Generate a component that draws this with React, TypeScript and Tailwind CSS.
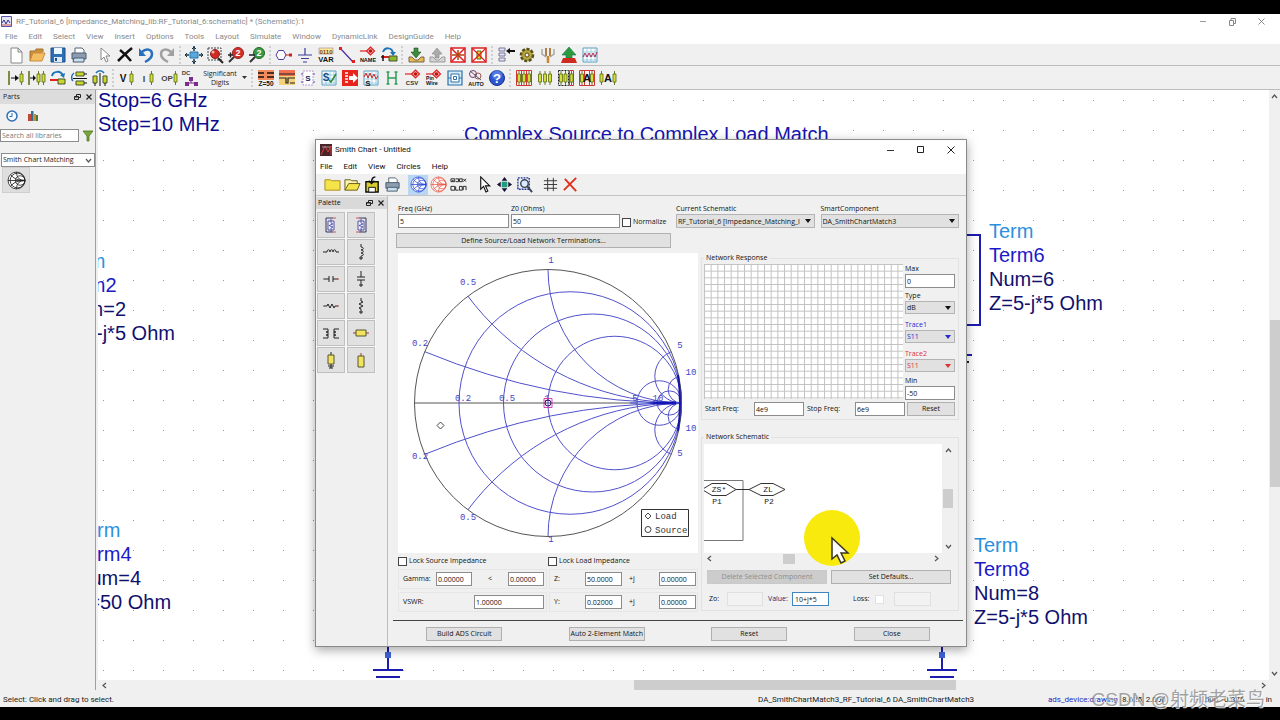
import React from "react";

const UI = "font-['Open_Sans','Noto_Sans',sans-serif]";

/* ---------- shared icon shapes ---------- */

type IconProps = { children: React.ReactNode; size?: number };

function Glyph({ children, size = 18 }: IconProps) {
  return (
    <svg width={size} height={size} viewBox="0 0 18 18" fill="none" aria-hidden="true">
      {children}
    </svg>
  );
}

const folder = (
  <>
    <path d="M2 15V5h5l1-2h7v3" fill="#c98f3c" stroke="#a9742c" />
    <path d="M2 15 5 7h12l-3 8z" fill="#f5bd62" stroke="#c98f3c" />
  </>
);
const printer = (
  <>
    <path d="M5 7V2h7l2 2v3" fill="#fff" stroke="#567" />
    <path d="M2 7h14v6H2z" fill="#8d9db0" stroke="#4a5b70" />
    <path d="M4 12h10v4H3z" fill="#c9e0ee" stroke="#4a5b70" />
  </>
);
const ycap = (x: number) => (
  <g>
    <path d={`M${x + 1.5} 2v14`} stroke="#6a7a2a" />
    <path d={`M${x} 5h3v8h-3z`} fill="#d3e03a" stroke="#5c6a12" strokeWidth=".8" />
  </g>
);
const gridBox = (
  <>
    <path d="M2 2h14v14H2z" fill="#fff" stroke="#58a0c0" />
    <path d="M6 2v14M10 2v14M14 2v14M2 6h14M2 10h14M2 14h14" stroke="#8fc4dc" strokeWidth=".8" />
  </>
);
const probe = (
  <>
    <path d="M1 5h9" stroke="#d22" strokeWidth="1.200" />
    <path d="m11.500 1 4 4-4 4-4-4z" fill="#fbb" stroke="#d22" strokeWidth="1.200" />
    <circle cx="11.500" cy="5" r="1.800" fill="#b11" />
  </>
);

function tiny(text: string, x: number, y: number, size = 6, fill = "#111") {
  return (
    <text
      x={x}
      y={y}
      fontSize={size}
      fill={fill}
      fontWeight="700"
      textAnchor="middle"
      fontFamily="'Liberation Sans', sans-serif"
    >
      {text}
    </text>
  );
}

type Tool = [string, React.ReactNode];

const fileTools: Tool[] = [
  ["New", <path d="M4 2h7l4 4v11H4zM11 2v4h4" fill="#fff" stroke="#888" />],
  ["Open", folder],
  [
    "Save",
    <>
      <path d="M2 2h14v14H2z" fill="#2c6fb5" stroke="#1c4f88" />
      <path d="M5 2h8v6H5z" fill="#eef6ff" />
      <path d="M5 11h8v5H5z" fill="#dceaf7" />
      <path d="M6 12h2v3H6z" fill="#1c4f88" />
    </>,
  ],
  ["Print", printer],
];
const editTools: Tool[] = [
  ["Select", <path d="M6 2v12l3-3 2 5 2-1-2-5h4z" fill="#fff" stroke="#888" />],
  ["Delete", <path d="M2 15C6 11 10 7 16 2M4 4c4 3 7 6 11 11" stroke="#111" strokeWidth="2.500" />],
  [
    "Undo",
    <>
      <path d="M5 6c4-4 10-3 10 2 0 3-3 6-7 8" stroke="#2670bd" strokeWidth="2.500" />
      <path d="M2 2v8h7z" fill="#2670bd" />
    </>,
  ],
  [
    "Redo",
    <>
      <path d="M13 6C9 2 3 3 3 8c0 3 3 6 7 8" stroke="#a0a0a0" strokeWidth="2.500" />
      <path d="M16 2v8H9z" fill="#a0a0a0" />
    </>,
  ],
];
const viewTools: Tool[] = [
  [
    "Pan",
    <>
      <path d="M5 6h8v6H5z" fill="#58a9dd" stroke="#2475aa" />
      <path d="M9 0v5M9 13v5M0 9h4M14 9h4" stroke="#134" strokeWidth="1.500" />
      <path d="m7 3 2-2 2 2M7 15l2 2 2-2M2 7 0 9l2 2M16 7l2 2-2 2" stroke="#134" />
    </>,
  ],
  [
    "Zoom area",
    <>
      <path d="M2 2h13v12H2z" stroke="#444" strokeDasharray="2 1" />
      <circle cx="9" cy="8" r="4.500" fill="#d22a22" stroke="#822" />
      <path d="m12 12 5 5" stroke="#222" strokeWidth="2" />
      <circle cx="7" cy="6" r="1.500" fill="#f8b8b0" />
    </>,
  ],
  [
    "Zoom in by 2",
    <>
      <circle cx="11" cy="7" r="5.500" fill="#d03028" stroke="#922" />
      {tiny("2", 11, 10, 9, "#fff")}
      <path d="m7 11-5 5" stroke="#333" strokeWidth="2" />
      <path d="M1 9h5M3.500 6.500v5" stroke="#222" strokeWidth="1.500" />
    </>,
  ],
  [
    "Zoom out by 2",
    <>
      <circle cx="11" cy="7" r="5.500" fill="#3a9a45" stroke="#262" />
      {tiny("2", 11, 10, 9, "#fff")}
      <path d="m7 11-5 5" stroke="#333" strokeWidth="2" />
      <path d="M1 9h6" stroke="#222" strokeWidth="1.500" />
    </>,
  ],
];
const insertTools: Tool[] = [
  [
    "Port",
    <>
      <path d="M1 9 3.500 4.500h5L11 9l-2.500 4.500h-5z" stroke="#4a3a9c" fill="#fff" />
      <path d="M11 9h5" stroke="#c22" />
      <path d="M14 7.500h3v3h-3z" fill="#c22" />
    </>,
  ],
  ["Ground", <path d="M9 2v7M2 9h14M5 12.500h8M7 16h4" stroke="#3b3b9c" strokeWidth="1.200" />],
  [
    "Variable",
    <>
      <path d="M2 2h14v6H2z" fill="#f8e8a0" stroke="#a88" strokeWidth=".6" />
      {tiny("0110", 9, 7.5, 6, "#841")}
      {tiny("VAR", 9, 16, 7.5)}
    </>,
  ],
  [
    "Wire",
    <>
      <path d="m2 2 13 14" stroke="#4a2b9c" strokeWidth="1.200" />
      <path d="M1 1h3v3H1zM14 14h3v3h-3z" fill="#d22" />
    </>,
  ],
  ["Wire name", <>{probe}{tiny("NAME", 9, 16, 5.5)}</>],
  [
    "Deactivate",
    <>
      <path d="M3 6c2-5 9-5 10 1" stroke="#1d75b5" strokeWidth="2" />
      <path d="m10 6 3 4 3-4z" fill="#1d75b5" />
      <path d="M1 11h8" stroke="#d22" strokeWidth="2" />
      <path d="M9 10h8v5H9z" fill="#8fb52a" stroke="#453" />
      <path d="M3 9v6" stroke="#111" strokeWidth="1.500" />
    </>,
  ],
];
const hierTools: Tool[] = [
  [
    "Push into",
    <>
      <path d="M2 11h3l3 3h3l3-3h3v5H2z" fill="#e8b848" stroke="#765" />
      <path d="M7 2h4v4h3l-5 6-5-6h3z" fill="#3c8a3c" stroke="#252" strokeWidth=".6" />
    </>,
  ],
  [
    "Pop out",
    <>
      <path d="M2 11h3l3 3h3l3-3h3v5H2z" fill="#d4d4d4" stroke="#999" />
      <path d="M7 12h4V8h3L9 2 4 8h3z" fill="#aaa" stroke="#888" strokeWidth=".6" />
    </>,
  ],
  [
    "Disable",
    <>
      <path d="M2 2h14v14H2z" fill="#fff" stroke="#d22" strokeWidth="1.500" />
      <path d="m2 2 14 14M16 2 2 16" stroke="#d22" strokeWidth="1.500" />
      <path d="M3 9h12M9 4v10" stroke="#a41" strokeWidth="1.500" />
    </>,
  ],
  [
    "Short",
    <>
      <path d="M2 2h14v14H2z" fill="#fff" stroke="#d22" strokeWidth="1.500" />
      <path d="M7 5h4v8H7z" fill="#e6d32e" stroke="#661" />
      <path d="m2 2 14 14M16 2 2 16" stroke="#d22" strokeWidth="1.200" />
    </>,
  ],
];
const simTools: Tool[] = [
  [
    "Component list",
    <>
      <path d="M2 2h6v3H2zM2 7h6v3H2zM2 12h6v3H2z" fill="#e3e6f4" stroke="#779" />
      <path d="M18 5h-6" stroke="#111" strokeWidth="2" />
      <path d="m9 5 4-3v6z" fill="#111" />
    </>,
  ],
  [
    "Simulate",
    <>
      <circle cx="9" cy="9" r="6" fill="#b9a53c" stroke="#54501c" strokeWidth="2.500" strokeDasharray="3 1.500" />
      <circle cx="9" cy="9" r="2" fill="#eee" stroke="#54501c" />
    </>,
  ],
  [
    "Tune",
    <>
      <path d="M7 2v8M11 2v8" stroke="#b0804a" strokeWidth="2" />
      <path d="M3 3v5l4 3M15 3v5l-4 3" stroke="#a8a8a8" strokeWidth="1.500" />
      <path d="M9 10v7" stroke="#c9862a" strokeWidth="2.500" />
    </>,
  ],
  [
    "Optimize",
    <>
      <path d="M9 1 2 9h4v3h6V9h4z" fill="#2c9a3c" stroke="#175" strokeWidth=".6" />
      <path d="M3 12h12l2 5H1z" fill="#cf2a20" />
    </>,
  ],
  ["Data display", <>{gridBox}<path d="m2 11 2-4 2 4 2-4 2 4 2-4 2 4 2-5" stroke="#b02a50" /></>],
];

const placeTools: Tool[] = [
  ["Wire gap", <><path d="M2 2v14" stroke="#5c6a12" strokeWidth="1.500" />{ycap(13)}<path d="M4 9h6" stroke="#111" /><path d="m8 6 4 3-4 3z" fill="#111" /></>],
  ["Wire stretch", <><path d="M1 2v14" stroke="#5c6a12" strokeWidth="1.500" />{ycap(9)}{ycap(14)}<path d="M2 9h4" stroke="#111" /><path d="m5 6 3 3-3 3z" fill="#111" /></>],
  [
    "Rotate",
    <>
      <path d="M3 7c1-5 9-6 11 0" stroke="#1d75b5" strokeWidth="2" />
      <path d="m11 6 4 3 1-5z" fill="#1d75b5" />
      <path d="M1 11h9" stroke="#d22" strokeWidth="2" />
      <path d="M9 10h7v5H9z" fill="#c9d62a" stroke="#453" />
    </>,
  ],
  [
    "Mirror X",
    <>
      <path d="M6 3h8v4H6zM6 12h8v4H6z" fill="#c9d62a" stroke="#453" />
      <path d="M3 9.500h14M14 5h3M14 14h3" stroke="#111" />
      <path d="M4 4C1 6 1 10 3 12" stroke="#1d75b5" strokeWidth="1.500" />
    </>,
  ],
  [
    "Mirror Y",
    <>
      <path d="M2 7h4v7H2zM12 7h4v7h-4z" fill="#c9d62a" stroke="#453" />
      <path d="M9 4v13M4 14v3M14 14v3" stroke="#111" />
      <path d="M5 4c2-3 6-3 8 0" stroke="#1d75b5" strokeWidth="1.500" />
    </>,
  ],
];
const annTools: Tool[] = [
  ["Voltage", <>{tiny("V", 5, 13, 10)}{ycap(12)}</>],
  ["Current", <>{tiny("I", 5, 12.5, 9, "#444")}{ycap(11)}</>],
  ["Operating point", <>{tiny("OP", 7, 12, 8, "#444")}{ycap(14)}</>],
  [
    "DC",
    <>
      {tiny("DC", 5, 6, 6, "#444")}
      <path d="M8 8h4v4H8zM4 13h4v4H4zM13 13h4v4h-4z" fill="#7b2b8c" />
      <path d="M10 12v2M6 14h8" stroke="#7b2b8c" />
    </>,
  ],
];
const rfTools: Tool[] = [
  [
    "Impedance",
    <>
      <path d="M1 1h16v10H1z" fill="#f28a5c" />
      <path d="M1 4h6M10 4h7M1 8h6M10 8h7" stroke="#111" strokeWidth="1.500" />
      {tiny("Z=50", 9, 17, 6.5)}
    </>,
  ],
  [
    "Line calc",
    <>
      <path d="M1 1h16v6H1z" fill="#f07050" />
      <path d="M1 7h16v9H1z" fill="#f4d27a" />
      <path d="M1 5h16M1 9h7v5h2V9h7M12 14h5" stroke="#222" strokeWidth="1.200" />
    </>,
  ],
  [
    "S block",
    <>
      <path d="M4 2h10v14H4z" fill="#fff" stroke="#b9c" strokeDasharray="2 1" />
      <path d="M2 5h2M2 13h2M14 5h2M14 13h2" stroke="#55a" />
      {tiny("S", 9, 12, 8, "#226")}
    </>,
  ],
  ["S check", <>{gridBox}{tiny("S", 6, 12, 10, "#174a80")}<path d="m9 11 2 2 5-8" stroke="#2a8a3a" strokeWidth="1.500" /></>],
  [
    "Export",
    <>
      <path d="M1 1h16v16H1z" fill="#e8251c" />
      <path d="M4 4h3M4 7h3M4 10h3M4 13h3" stroke="#fff" strokeWidth="1.500" />
      <path d="M8 7h4V4l5 5-5 5v-3H8z" fill="#fff" />
    </>,
  ],
  ["S plot", <>{gridBox}<path d="m2 8 2-4 2 5 2-5 2 5 2-4 2 5 2-3" stroke="#c22" />{tiny("S", 6, 17, 8, "#222")}</>],
  ["H block", <path d="M5 3v12M13 3v12M5 9h8M3.500 3h3M3.500 15h3M11.500 3h3M11.500 15h3" stroke="#2b9c58" strokeWidth="1.500" />],
  ["CSV probe", <>{probe}{tiny("CSV", 8, 16, 6, "#333")}</>],
  ["Pin wire", <>{probe}{tiny("Pin", 5, 11, 5)}{tiny("Wire", 7, 16, 5.5)}</>],
  [
    "Layout",
    <>
      <path d="M2 2h14v14H2z" fill="#d4ebf8" stroke="#2f70a8" strokeWidth="1.200" />
      <path d="M5 5h8v8H5z" fill="#fff" stroke="#2f70a8" />
      <path d="M7.500 7.500h3v3h-3zM2 9h3M13 9h3" stroke="#2f70a8" />
    </>,
  ],
  [
    "Auto",
    <>
      <circle cx="6" cy="5" r="3.500" stroke="#737" />
      <circle cx="11" cy="7" r="3" stroke="#955" />
      <path d="m3 2 11 9" stroke="#555" />
      {tiny("AUTO", 9, 17, 5.5)}
    </>,
  ],
  [
    "Help",
    <>
      <circle cx="9" cy="9" r="7.500" fill="#2c55cf" stroke="#15328c" />
      <circle cx="9" cy="6" r="5" fill="#6f92ee" opacity=".6" />
      {tiny("?", 9, 14, 13, "#fff")}
    </>,
  ],
];
const redFrame = <path d="M1.500 1.500h15v15h-15zM6.500 2v14M11.500 2v14" stroke="#cf3434" fill="#fdf3f0" />;
const optTools: Tool[] = [
  ["Tune all", <>{redFrame}{ycap(2.5)}{ycap(7.5)}{ycap(12.5)}</>],
  ["Tune parts", <>{ycap(2.5)}{ycap(7.5)}{ycap(12.5)}</>],
  [
    "Tune group",
    <>
      <path d="M1.500 1.500h10v15h-10z" stroke="#222" strokeDasharray="2 1" />
      <path d="M12.500 1.500h4v15h-4z" stroke="#cf3434" fill="#fdf3f0" />
      {ycap(2.5)}{ycap(7)}{ycap(13)}
    </>,
  ],
  ["Auto all", <>{redFrame}{ycap(2.5)}{ycap(12.5)}{tiny("A", 9, 13, 11)}</>],
  ["Auto parts", <>{ycap(1)}{ycap(14)}{tiny("A", 9, 13, 11)}</>],
];

function ToolGroup({ items, divider = true }: { items: Tool[]; divider?: boolean }) {
  return (
    <div className="flex items-center">
      {divider && (
        <span className="mr-[2px] flex h-[18px] w-[4px] border-r-2 border-dotted border-[#cfcfcf]" />
      )}
      {items.map(([name, art]) => (
        <button key={name} aria-label={name} className="flex h-5 w-[21px] items-center justify-center">
          <Glyph>{art}</Glyph>
        </button>
      ))}
    </div>
  );
}

/* ---------- small controls ---------- */

function Field({ label, value, className, disabled }: { label: string; value?: string; className: string; disabled?: boolean }) {
  return (
    <input
      aria-label={label}
      defaultValue={value}
      disabled={disabled}
      className={`min-w-0 border px-[1px] text-[7px] leading-[11px] outline-none ${
        disabled ? "border-[#e0e0e0] bg-[#f2f2f2]" : "border-[#8c8c8c] bg-white"
      } ${className}`}
    />
  );
}

function Combo({ label, value, className }: { label: string; value: string; className: string }) {
  return (
    <span className={`relative flex border border-[#b4b4b4] bg-[#e1e1e1] ${className}`}>
      <select aria-label={label} className="w-full appearance-none truncate bg-transparent pl-[1px] pr-3 text-[7px] leading-[11px] outline-none">
        <option>{value}</option>
      </select>
      <svg viewBox="0 0 6 4" className="pointer-events-none absolute right-[3px] top-[4px] h-[4px] w-[6px]" aria-hidden="true">
        <path d="M0 0h6L3 4z" fill="currentColor" />
      </svg>
    </span>
  );
}

function Push({ children, className, disabled }: { children: React.ReactNode; className: string; disabled?: boolean }) {
  return (
    <button
      disabled={disabled}
      className={`border text-center text-[7px] leading-[12px] whitespace-nowrap ${
        disabled ? "border-[#c9c9c9] bg-[#cccccc] text-[#8c8c8c]" : "border-[#b0b0b0] bg-[#e1e1e1]"
      } ${className}`}
    >
      {children}
    </button>
  );
}

function Check({ label, dim }: { label?: string; dim?: boolean }) {
  return (
    <label className="flex items-center gap-[2px] whitespace-nowrap">
      <input
        type="checkbox"
        aria-label={label ?? "Loss enabled"}
        className={`size-[9px] appearance-none border bg-white ${dim ? "border-[#e2e2e2]" : "border-[#444]"}`}
      />
      {label}
    </label>
  );
}

function PanelButtons() {
  return (
    <span className="ml-auto flex items-center gap-[5px]">
      <button aria-label="Float panel">
        <svg width="7" height="7" viewBox="0 0 7 7" fill="none" aria-hidden="true">
          <path d="M2.500 2V.5h4v3H5M.5 2.500h4v3h-4zM.5 3h4" stroke="#222" />
        </svg>
      </button>
      <button aria-label="Close panel">
        <svg width="6" height="6" viewBox="0 0 6 6" aria-hidden="true">
          <path d="m.5.5 5 5M5.500.5l-5 5" stroke="#222" strokeWidth="1.200" />
        </svg>
      </button>
    </span>
  );
}

function Chevron({ dir }: { dir: "up" | "down" | "left" | "right" }) {
  const d = {
    up: "M1 5l2.500-3L6 5",
    down: "M1 2l2.500 3L6 2",
    left: "M5 1L2 3.500 5 6",
    right: "M2 1l3 2.500L2 6",
  }[dir];
  return (
    <svg width="7" height="7" viewBox="0 0 7 7" fill="none" className="shrink-0" aria-hidden="true">
      <path d={d} stroke="#555" strokeWidth="1.200" />
    </svg>
  );
}

/* ---------- Smith chart ---------- */

function SmithLines({ color }: { color: string }) {
  const R = 133.5;
  const right = 150 + R;
  return (
    <g stroke={color} fill="none" strokeWidth="1">
      {[0.2, 0.5, 1, 5, 10].map((r) => (
        <circle key={r} cx={150 + (R * r) / (1 + r)} cy={150} r={R / (1 + r)} />
      ))}
      <g clipPath="url(#unit)">
        {[0.2, 0.5, 1, 5, 10].map((x) => (
          <g key={x}>
            <circle cx={right} cy={150 - R / x} r={R / x} />
            <circle cx={right} cy={150 + R / x} r={R / x} />
          </g>
        ))}
      </g>
    </g>
  );
}

const chartLabels: [string, number, number][] = [
  ["1", 153, 7], ["0.5", 70, 29], ["0.2", 22, 90], ["0.2", 65, 145], ["0.5", 109, 145],
  ["1", 149, 145], ["5", 237, 145], ["10", 260, 145], ["5", 282, 92], ["10", 293, 119],
  ["10", 293, 175], ["5", 282, 200], ["0.2", 22, 203], ["0.5", 70, 264], ["1", 153, 286],
];

function SmithChart() {
  return (
    <svg viewBox="0 0 300 300" className="block size-[300px] bg-white" role="img" aria-label="Smith chart">
      <defs>
        <clipPath id="unit">
          <circle cx="150" cy="150" r="133.500" />
        </clipPath>
      </defs>
      <path d="M17 150h222" stroke="#8e8e8e" strokeWidth="1.500" />
      <SmithLines color="#5050cc" />
      <circle cx="150" cy="150" r="133.500" fill="none" stroke="#555" />
      <path d="M232 150h50" stroke="#3a4ad0" strokeWidth="1" />
      <path d="M248 150l14-1.500h16v3h-16z" fill="#1515b8" />
      <path d="M280 122q4 28 0 56" fill="none" stroke="#1515a8" strokeWidth="2" />
      <g fontFamily="'Liberation Mono', monospace" fontSize="9" fill="#4444c4" textAnchor="middle">
        {chartLabels.map(([t, x, y]) => (
          <text key={`${x}-${y}`} x={x} y={y + 3}>
            {t}
          </text>
        ))}
      </g>
      <path d="M146 145.500h8v9h-8z" fill="none" stroke="#d040b8" />
      <circle cx="150" cy="150" r="3" fill="none" stroke="#3a1060" />
      <path d="m42.500 169 3.500 3.500-3.500 3.500-3.500-3.500z" fill="#fff" stroke="#444" />
      <path d="M243.500 256.500h47v27h-47z" fill="#fff" stroke="#333" />
      <path d="m250 260 3 3-3 3-3-3z" fill="none" stroke="#444" />
      <circle cx="250" cy="276.500" r="3" fill="none" stroke="#444" />
      <g fontFamily="'Liberation Mono', monospace" fontSize="9" fill="#333">
        <text x="257" y="266">Load</text>
        <text x="257" y="280">Source</text>
      </g>
    </svg>
  );
}

/* ---------- dialog ---------- */

const K = "#222";
const paletteArt: Tool[] = [
  ["Source block", <><path d="M11 2H4v14h7" stroke="#225" strokeWidth=".9" /><path d="M6 5h6v9H6z" stroke="#449" strokeWidth=".9" fill="#eef" /><path d="M9 3v4l2 1-4 1.500 4 1.500-2 1v4" stroke="#449" strokeWidth=".8" /><path d="M11 2h3M11 16h3" stroke="#c55" /></>],
  ["Load block", <><path d="M7 2h7v14H7" stroke="#225" strokeWidth=".9" /><path d="M6 5h6v9H6z" stroke="#449" strokeWidth=".9" fill="#eef" /><path d="M9 3v4l2 1-4 1.500 4 1.500-2 1v4" stroke="#449" strokeWidth=".8" /><path d="M4 2h3M4 16h3" stroke="#c55" /></>],
  ["Series inductor", <path d="M1 9h4c0-3 3-3 3 0 0-3 3-3 3 0 0-3 3-3 3 0h3" stroke={K} />],
  ["Shunt inductor", <path d="M9 1v3c3 0 3 3 0 3 3 0 3 3 0 3 3 0 3 3 0 3v4M7 15h4" stroke={K} />],
  ["Series capacitor", <><path d="M2 9h5M7 6v6M11 6v6M11 9h5" stroke={K} /><path d="M1 9h1M16 9h1" stroke="#c33" /></>],
  ["Shunt capacitor", <path d="M9 1v6M5 7h8M5 10h8M9 10v7M7 15h4" stroke={K} />],
  ["Series resistor", <><path d="M2 9h3l1-2 2 4 2-4 2 4 1-2h3" stroke={K} /><path d="M1 9h1M16 9h1" stroke="#c33" /></>],
  ["Shunt resistor", <path d="M9 1v3l2 1-4 2 4 2-4 2 2 1v5M7 15h4" stroke={K} />],
  ["Transformer", <path d="M1 5h5v3H4h2v3H4h2v3H1M17 5h-5v3h2-2v3h2-2v3h5" stroke={K} />],
  ["Series line", <><path d="M1 9h16" stroke="#a33" /><path d="M4 6h10v6H4z" fill="#f2e45c" stroke="#553" /></>],
  ["Shorted stub", <><path d="M9 1v16M6 15h6M7 17h4" stroke={K} /><path d="M6 4h6v9H6z" fill="#f2e45c" stroke="#553" /></>],
  ["Open stub", <><path d="M9 2v4" stroke="#a33" /><path d="M6 5h6v11H6z" fill="#f2e45c" stroke="#553" /></>],
];

const smith = (c: string) => (
  <g stroke={c} strokeWidth=".8">
    <circle cx="9" cy="9" r="8" fill="#fff" />
    <path d="M1 9h16" />
    <circle cx="12.500" cy="9" r="4.500" />
    <path d="M9 1q0 8 8 8M9 17q0-8 8-8M3.500 3.500Q7 9 17 9M3.500 14.500Q7 9 17 9" />
    <circle cx="10" cy="9" r="7" />
  </g>
);

const dialogTools: { tool: Tool; cls: string }[] = [
  { tool: ["New folder", <path d="M1 4h6l1 1h9v10H1z" fill="#f5e34a" stroke="#aa8a1a" />], cls: "" },
  { tool: ["Open", <><path d="M1 15V4h6l1 1h6v3" fill="#fbf4b0" stroke="#665a1a" /><path d="m1 15 4-7h12l-3 7z" fill="#f5e34a" stroke="#665a1a" /></>], cls: "" },
  { tool: ["Save", <><path d="M2 6h13v11H2z" fill="#d8cc30" stroke="#111" strokeWidth="1.500" /><path d="M5 12h7v5H5z" fill="#fff" stroke="#111" /><path d="M12 1c-3 0-4 2-4 6M5 5l3 3 3-3" stroke="#111" strokeWidth="1.500" /></>], cls: "" },
  { tool: ["Print", printer], cls: "" },
  { tool: ["Impedance chart", smith("#2c4bd8")], cls: "ml-[6px] bg-[#b9d6f2]" },
  { tool: ["Admittance chart", smith("#e85a4a")], cls: "" },
  { tool: ["Element labels", <path d="M1 3h4v3H1zM6 3h3v3H6M10 3h3v3h-3zM14 3l3 3M17 3l-3 3M1 11h4v4H1zM6 11v4h3M10 11h3v4h-3zM14 15v-4h3v4M2 5h2" stroke="#222" />], cls: "" },
  { tool: ["Pointer", <path d="M5 1v13l3-3 2.500 6 2-1L10 10.500h4.500z" fill="#fff" stroke="#111" strokeWidth="1.200" />], cls: "ml-[6px]" },
  { tool: ["Pan", <><path d="M6 6h6v6H6z" fill="#1f9c7c" /><path d="M9 1 6 5h6zM9 17l-3-4h6zM1 9l4-3v6zM17 9l-4-3v6z" fill="#113" /></>], cls: "" },
  { tool: ["Zoom window", <><path d="M2 2h12v12H2z" stroke="#223a9c" strokeWidth="1.500" strokeDasharray="2 1" /><circle cx="9" cy="8" r="4" fill="#dcebff" stroke="#345" strokeWidth="1.500" /><path d="m12 11 5 6" stroke="#345" strokeWidth="2" /></>], cls: "" },
  { tool: ["Grid", <path d="M6 2v14M12 2v14M2 5h14M2 9h14M2 13h14" stroke="#333" />], cls: "ml-[6px]" },
  { tool: ["Delete", <path d="m3 3 12 13M15 2 2 15" stroke="#e0301c" strokeWidth="2" />], cls: "" },
];

function NetworkPlot() {
  return (
    <svg className="block h-[135px] min-w-0 flex-1 bg-white" role="img" aria-label="Network response plot">
      <defs>
        <pattern id="cells" width="6.670" height="6.670" patternUnits="userSpaceOnUse">
          <path d="M0 .5h6.670M.5 0v6.670" stroke="#c2c2c2" />
        </pattern>
      </defs>
      <rect width="100%" height="100%" fill="url(#cells)" />
    </svg>
  );
}

function ResponsePanel() {
  const side: { label: string; value: string; kind: "in" | "sel"; cls: string }[] = [
    { label: "Max", value: "0", kind: "in", cls: "" },
    { label: "Type", value: "dB", kind: "sel", cls: "mt-[3px]" },
    { label: "Trace1", value: "S11", kind: "sel", cls: "mt-[6px] text-[#2a2ad0]" },
    { label: "Trace2", value: "S11", kind: "sel", cls: "mt-[6px] text-[#e03030]" },
    { label: "Min", value: "-50", kind: "in", cls: "mt-[4px]" },
  ];
  return (
    <fieldset className="min-w-0 border border-[#e2e2e2] pr-[3px] pb-[3px] pl-[2px]">
      <legend className="px-[2px] leading-[10px]">Network Response</legend>
      <div className="mt-[1px] flex gap-[2px]">
        <NetworkPlot />
        <div className="flex w-[50px] shrink-0 flex-col">
          {side.map((s) => (
            <div key={s.label} className={`flex flex-col ${s.cls}`}>
              <span className="leading-[10px]">{s.label}</span>
              {s.kind === "in" ? (
                <Field label={s.label} value={s.value} className="h-[14px]" />
              ) : (
                <Combo label={s.label} value={s.value} className="h-[13px]" />
              )}
            </div>
          ))}
        </div>
      </div>
      <div className="mt-[2px] flex items-center gap-[2px]">
        <label className="flex items-center pl-[1px]">
          <span className="w-[49px]">Start Freq:</span>
          <Field label="Start Freq" value="4e9" className="h-[14px] w-[50px]" />
        </label>
        <label className="flex items-center pl-[1px]">
          <span className="w-[48px]">Stop Freq:</span>
          <Field label="Stop Freq" value="6e9" className="h-[14px] w-[50px]" />
        </label>
        <Push className="h-[14px] flex-1">Reset</Push>
      </div>
    </fieldset>
  );
}

function SchematicPanel() {
  return (
    <fieldset className="mt-[12px] min-w-0 border border-[#e2e2e2] pr-[4px] pb-[4px] pl-[2px]">
      <legend className="px-[2px] leading-[10px]">Network Schematic</legend>
      <div className="mt-[2px] flex">
        <svg viewBox="0 0 238 109" className="block h-[109px] min-w-0 flex-1 bg-white" preserveAspectRatio="xMinYMin meet" role="img" aria-label="Network schematic">
          <g fill="none" stroke="#333">
            <path d="M0 36.500h39v60H0" stroke="#777" />
            <path d="M-2 45.500 8 39.500h14l10 6-10 6H8zM32 45.500h13M45 45.500l12-6h12l12 6-12 6H57z" />
          </g>
          <g fontFamily="'Liberation Mono', monospace" fontSize="8" fill="#222" textAnchor="middle">
            <text x="15" y="48">ZS*</text>
            <text x="64" y="48">ZL</text>
            <text x="13" y="60">P1</text>
            <text x="65" y="60">P2</text>
          </g>
        </svg>
        <div className="flex w-[12px] flex-col items-center justify-between py-[3px]">
          <Chevron dir="up" />
          <span className="h-[19px] w-[10px] bg-[#cdcdcd]" />
          <Chevron dir="down" />
        </div>
      </div>
      <div className="mr-[12px] flex h-[11px] items-center pr-[2px] pl-[2px]">
        <Chevron dir="left" />
        <span className="ml-[70px] h-[10px] w-[12px] bg-[#cdcdcd]" />
        <span className="flex-1" />
        <Chevron dir="right" />
      </div>
      <div className="mt-[6px] flex gap-1 pr-[3px] pl-[3px]">
        <Push disabled className="h-[14px] flex-1">Delete Selected Component</Push>
        <Push className="h-[14px] flex-1">Set Defaults...</Push>
      </div>
      <div className="mt-[8px] flex items-center pl-[5px]">
        <span className="w-[18px]">Zo:</span>
        <Field label="Zo" disabled className="h-[14px] w-[36px]" />
        <span className="ml-[5px] w-[24px] text-[#1d1d6e]">Value:</span>
        <input aria-label="Value" defaultValue="10+j*5" className="h-[14px] w-[37px] border border-[#3f86c0] bg-white px-[2px] text-[7px] leading-[11px] outline-none" />
        <span className="ml-[24px] w-[22px]">Loss:</span>
        <Check dim />
        <span className="w-[10px]" />
        <Field label="Loss" disabled className="h-[14px] w-[37px]" />
      </div>
    </fieldset>
  );
}

function Dialog() {
  return (
    <section
      aria-label="Smith Chart"
      className="absolute top-[49px] left-[217px] flex w-[652px] flex-col border border-[#8a8a8a] bg-[#f0f0f0] text-[7px] leading-[10px] text-[#111] shadow-[0_3px_10px_rgba(0,0,0,0.35)]"
    >
      <header className="flex h-[19px] items-center bg-white pr-[11px] pl-[4px]">
        <svg width="12" height="12" viewBox="0 0 12 12" aria-hidden="true">
          <path d="M0 0h12v12H0z" fill="#4a2428" />
          <path d="M1 11 5 2l3 6 3-6v9" stroke="#d84040" fill="none" />
          <path d="M2 3h8" stroke="#999" />
        </svg>
        <h2 className="ml-[3px] font-['Roboto',sans-serif] text-[8px]">Smith Chart - Untitled</h2>
        <span className="ml-auto flex items-center gap-[22px]">
          <button aria-label="Minimize"><svg width="8" height="8" viewBox="0 0 8 8"><path d="M0 4.500h7" stroke="#333" /></svg></button>
          <button aria-label="Maximize"><svg width="8" height="8" viewBox="0 0 8 8" fill="none"><path d="M.5.5h6v6h-6z" stroke="#222" /></svg></button>
          <button aria-label="Close"><svg width="8" height="8" viewBox="0 0 8 8"><path d="m.5.5 7 7M7.500.5l-7 7" stroke="#222" /></svg></button>
        </span>
      </header>
      <nav className="flex h-[15px] items-center gap-[11px] bg-white pl-[4px] font-['Roboto',sans-serif] text-[8px]">
        {["File", "Edit", "View", "Circles", "Help"].map((m) => (
          <button key={m}>{m}</button>
        ))}
      </nav>
      <div className="flex h-[22px] items-center border-b border-[#c4c4c4] pl-[6px]">
        {dialogTools.map(({ tool: [name, art], cls }) => (
          <button key={name} aria-label={name} className={`flex h-5 w-[20px] items-center justify-center ${cls}`}>
            <Glyph size={17}>{art}</Glyph>
          </button>
        ))}
      </div>

      <div className="flex">
        <aside className="flex w-[72px] shrink-0 flex-col border-r border-[#bdbdbd]">
          <div className="mt-[1px] flex h-[12px] items-center bg-[#d9d9d9] pr-[3px] pl-[2px]">
            Palette
            <PanelButtons />
          </div>
          <div className="mt-[3px] grid w-[60px] grid-cols-2 gap-x-[2px] gap-y-[1px] bg-[#f6f6f6] pr-[1px] pl-[1px]">
            {paletteArt.map(([name, art]) => (
              <button key={name} aria-label={name} className="flex h-[26px] items-center justify-center border border-[#c0c0c0] bg-[#e1e1e1]">
                <Glyph size={18}>{art}</Glyph>
              </button>
            ))}
          </div>
        </aside>

        <div className="flex min-w-0 flex-1 flex-col">
          <div className="flex flex-col pr-[7px] pl-[8px]">
            <div className="flex gap-[6px] pt-[8px]">
              <div className="flex w-[274px] items-start pl-[2px]">
                <label className="flex flex-col">
                  Freq (GHz)
                  <Field label="Freq" value="5" className="h-[14px] w-[111px]" />
                </label>
                <label className="ml-[2px] flex flex-col">
                  Z0 (Ohms)
                  <Field label="Z0" value="50" className="h-[14px] w-[109px]" />
                </label>
                <span className="mt-[13px] ml-[2px]">
                  <Check label="Normalize" />
                </span>
              </div>
              <label className="flex flex-1 flex-col">
                Current Schematic
                <Combo label="Current Schematic" value="RF_Tutorial_6 [Impedance_Matching_l" className="h-[14px]" />
              </label>
              <label className="flex flex-1 flex-col">
                SmartComponent
                <Combo label="SmartComponent" value="DA_SmithChartMatch3" className="h-[14px]" />
              </label>
            </div>
            <div className="mt-[5px] flex">
              <Push className="h-[15px] w-[275px]">Define Source/Load Network Terminations...</Push>
            </div>

            <div className="mt-[5px] flex gap-[3px]">
              <div className="flex w-[302px] shrink-0 flex-col pl-[2px]">
                <SmithChart />
                <div className="mt-[3px] grid grid-cols-2">
                  <Check label="Lock Source Impedance" />
                  <Check label="Lock Load Impedance" />
                </div>
                <div className="mt-[3px] grid grid-cols-2 gap-x-[2px] gap-y-[3px]">
                  <div className="flex h-[20px] items-center border border-[#e6e6e6] pr-[2px] pl-[4px]">
                    <span className="w-[33px]">Gamma:</span>
                    <Field label="Gamma magnitude" value="0.00000" className="h-[14px] w-[36px]" />
                    <span className="flex-1 text-center">&lt;</span>
                    <Field label="Gamma angle" value="0.00000" className="h-[14px] w-[36px]" />
                  </div>
                  <div className="flex h-[20px] items-center border border-[#e6e6e6] pr-[1px] pl-[4px]">
                    <span className="w-[31px]">Z:</span>
                    <Field label="Z real" value="50.0000" className="h-[14px] w-[37px]" />
                    <span className="flex-1 pl-[7px]">+j</span>
                    <Field label="Z imaginary" value="0.00000" className="h-[14px] w-[37px]" />
                  </div>
                  <div className="flex h-[20px] items-center border border-[#e6e6e6] pr-[2px] pl-[4px]">
                    <span className="flex-1">VSWR:</span>
                    <Field label="VSWR" value="1.00000" className="h-[14px] w-[70px]" />
                  </div>
                  <div className="flex h-[20px] items-center border border-[#e6e6e6] pr-[1px] pl-[4px]">
                    <span className="w-[31px]">Y:</span>
                    <Field label="Y real" value="0.02000" className="h-[14px] w-[37px]" />
                    <span className="flex-1 pl-[7px]">+j</span>
                    <Field label="Y imaginary" value="0.00000" className="h-[14px] w-[37px]" />
                  </div>
                </div>
              </div>
              <div className="flex min-w-0 flex-1 flex-col">
                <ResponsePanel />
                <SchematicPanel />
              </div>
            </div>
          </div>
          <div className="mt-[8px] mr-[3px] ml-[5px] grid grid-cols-4 justify-items-center border-t border-[#444] pt-[6px] pb-[5px]">
            {["Build ADS Circuit", "Auto 2-Element Match", "Reset", "Close"].map((b) => (
              <Push key={b} className="h-[14px] w-[76px]">{b}</Push>
            ))}
          </div>
        </div>
      </div>
    </section>
  );
}

/* ---------- schematic window ---------- */

function TermLabel({ className, lines }: { className: string; lines: [string, string, string, string] }) {
  return (
    <div className={`absolute whitespace-nowrap text-[#10106e] ${className}`}>
      <div className="text-[#2b8fe0]">{lines[0]}</div>
      <div className="text-[#1a1ac8]">{lines[1]}</div>
      <div>{lines[2]}</div>
      <div>{lines[3]}</div>
    </div>
  );
}

function SchematicCanvas() {
  return (
    <div className="relative min-w-0 flex-1 overflow-hidden bg-white font-['Liberation_Sans',sans-serif] text-[20px] leading-[24px]">
      <svg className="absolute inset-0 h-full w-full" aria-hidden="true">
        <defs>
          <pattern id="dots" width="30" height="30" patternUnits="userSpaceOnUse">
            <path d="M5 10h1v1H5z" fill="#999" />
          </pattern>
        </defs>
        <rect width="100%" height="100%" fill="url(#dots)" />
        <g stroke="#1c1cae" strokeWidth="2" fill="none">
          <path d="M860 145h22v90h-22M860 265h14" />
          <path d="M290 540v40M275 580h30M278 587h24M844 540v40M829 580h30M832 587h24" />
        </g>
        <path d="M287 562h6v6h-6zM841 562h6v6h-6z" fill="#3f62d8" />
        <path d="M869 271h2v2h-2z" fill="#222" />
      </svg>
      <div className="absolute top-[-2px] left-0 whitespace-nowrap text-[#0c0c8c]">
        <div>Stop=6 GHz</div>
        <div>Step=10 MHz</div>
      </div>
      <div className="absolute top-[32px] left-[366px] whitespace-nowrap text-[#1616b0]">
        Complex Source to Complex Load Match
      </div>
      <TermLabel className="top-[159px] left-[-37px]" lines={["Term", "Term2", "Num=2", "Z=5-j*5 Ohm"]} />
      <TermLabel className="top-[428px] left-[-22px]" lines={["Term", "Term4", "Num=4", "Z=50 Ohm"]} />
      <TermLabel className="top-[129px] left-[891px]" lines={["Term", "Term6", "Num=6", "Z=5-j*5 Ohm"]} />
      <TermLabel className="top-[443px] left-[876px]" lines={["Term", "Term8", "Num=8", "Z=5-j*5 Ohm"]} />
      <div className={UI}>
        <Dialog />
      </div>
      <svg className="absolute top-[420px] left-[706px] h-[56px] w-[56px]" viewBox="0 0 56 56" aria-hidden="true">
        <circle cx="28" cy="28" r="28" fill="#f7ea0c" />
        <path d="M28 28v21l5-4 4 8 4-2-4-8h7z" fill="#fff" stroke="#3a3420" strokeWidth="1.500" />
      </svg>
    </div>
  );
}

function PartsPanel() {
  return (
    <aside className="flex w-[96px] shrink-0 flex-col border-r border-[#a0a0a0] text-[7px] leading-[10px] text-[#222]">
      <div className="flex h-[14px] items-center bg-[#dcdcdc] pr-[3px] pl-[3px]">
        Parts
        <PanelButtons />
      </div>
      <div className="mt-[6px] flex gap-[9px] pl-[6px]">
        <button aria-label="Recent parts">
          <svg width="12" height="12" viewBox="0 0 12 12" fill="none" aria-hidden="true">
            <circle cx="6" cy="6" r="5" stroke="#2f6fb5" strokeWidth="1.500" fill="#f4faff" />
            <path d="M6 3v3.500H3.500" stroke="#2f6fb5" />
          </svg>
        </button>
        <button aria-label="Libraries">
          <svg width="12" height="12" viewBox="0 0 12 12" aria-hidden="true">
            <path d="M1 4h3v7H1z" fill="#c0483a" />
            <path d="M4 1h2.500v10H4z" fill="#2f6f9c" />
            <path d="M6.500 4H9v7H6.500z" fill="#c98a2c" />
            <path d="M9 5h2v6H9z" fill="#4a7a3a" />
          </svg>
        </button>
      </div>
      <div className="mt-[7px] flex items-center gap-[4px]">
        <input
          aria-label="Search all libraries"
          placeholder="Search all libraries"
          className="h-[13px] w-[79px] border border-[#8c8c8c] bg-white px-[1px] text-[7px] leading-[11px] placeholder:text-[#777]"
        />
        <button aria-label="Filter">
          <svg width="10" height="12" viewBox="0 0 10 12" aria-hidden="true">
            <path d="M0 1h10L6 6v5H4V6z" fill="#7aa63a" stroke="#4c7420" strokeWidth=".8" />
          </svg>
        </button>
      </div>
      <div className="relative mt-[11px] ml-[1px] flex h-[14px] border border-[#8c8c8c] bg-white">
        <select aria-label="Library" className="w-full appearance-none bg-transparent pl-[1px] text-[7px] outline-none">
          <option>Smith Chart Matching</option>
        </select>
        <span className="pointer-events-none absolute top-[3px] right-[2px]">
          <Chevron dir="down" />
        </span>
      </div>
      <button aria-label="Smith chart part" className="ml-[2px] flex h-[26px] w-[28px] items-center justify-center border border-[#cfcfcf] bg-[#dedede]">
        <Glyph size={19}>{smith("#222")}</Glyph>
      </button>
    </aside>
  );
}

const menus = ["File", "Edit", "Select", "View", "Insert", "Options", "Tools", "Layout", "Simulate", "Window", "DynamicLink", "DesignGuide", "Help"];

export default function App() {
  return (
    <div className={`flex min-h-screen flex-col bg-black pt-[14px] pb-[13px] ${UI}`}>
      <main className="flex flex-1 flex-col bg-[#f0f0f0]">
        <header className="flex h-[15px] items-center bg-white pr-[15px] pl-[1px] text-[#8a8a8a]">
          <svg width="11" height="11" viewBox="0 0 11 11" aria-hidden="true">
            <path d="M.5.5h10v10H.5z" fill="#e4e4f4" stroke="#55a" />
            <path d="m1 7 2-3 2 4 2-4 2 3" stroke="#338" fill="none" />
            <path d="M1 9h9" stroke="#c55" />
          </svg>
          <h1 className="ml-[4px] font-['Roboto',sans-serif] text-[8px] leading-[12px]">
            RF_Tutorial_6 [Impedance_Matching_lib:RF_Tutorial_6:schematic] * (Schematic):1
          </h1>
          <span className="ml-auto flex items-center gap-[22px]">
            <button aria-label="Minimize"><svg width="7" height="7" viewBox="0 0 7 7"><path d="M0 3.500h6" stroke="#999" /></svg></button>
            <button aria-label="Restore"><svg width="7" height="8" viewBox="0 0 7 8" fill="none"><path d="M.5 2.500h4v5h-4zM2 2V.5h4.500v5H5" stroke="#888" /></svg></button>
            <button aria-label="Close"><svg width="7" height="7" viewBox="0 0 7 7"><path d="m.5.5 6 6M6.500.5l-6 6" stroke="#888" /></svg></button>
          </span>
        </header>
        <nav className="flex h-[15px] items-center gap-[11px] bg-white pl-[5px] font-['Roboto',sans-serif] text-[8px] leading-[12px] text-[#8a8a8a]">
          {menus.map((m) => (
            <button key={m}>{m}</button>
          ))}
        </nav>
        <div className="flex h-[22px] items-center border-b border-[#bcbcbc] pl-[5px]">
          <ToolGroup items={fileTools} divider={false} />
          <span className="w-[4px]" />
          <ToolGroup items={editTools} divider={false} />
          <ToolGroup items={viewTools} />
          <ToolGroup items={insertTools} />
          <ToolGroup items={hierTools} />
          <ToolGroup items={simTools} />
        </div>
        <div className="flex h-[24px] items-center border-b border-[#bcbcbc] pl-[5px]">
          <ToolGroup items={placeTools} divider={false} />
          <ToolGroup items={annTools} />
          <button className="flex items-center text-[7px] leading-[9px] text-[#222]">
            <span className="w-[40px] text-center">Significant Digits</span>
            <span className="flex w-[9px] justify-center">
              <svg width="5" height="3" viewBox="0 0 5 3" aria-hidden="true"><path d="M0 0h5L2.500 3z" fill="#333" /></svg>
            </span>
          </button>
          <ToolGroup items={rfTools} />
          <ToolGroup items={optTools} />
        </div>

        <div className="flex flex-1 gap-[2px]">
          <PartsPanel />
          <div className="flex min-w-0 flex-1 flex-col">
            <div className="flex flex-1">
              <SchematicCanvas />
              <div className="flex w-[11px] flex-col items-center pt-[3px] pb-[3px]">
                <Chevron dir="up" />
                <span className="mt-[220px] h-[167px] w-[10px] bg-[#cdcdcd]" />
                <span className="flex-1" />
                <Chevron dir="down" />
              </div>
            </div>
            <div className="flex h-[10px] items-center pr-[13px] pl-[3px]">
              <Chevron dir="left" />
              <span className="ml-[526px] h-[10px] w-[322px] bg-[#cdcdcd]" />
              <span className="flex-1" />
              <Chevron dir="right" />
            </div>
          </div>
        </div>

        <footer className="relative flex h-[17px] items-center pt-[2px] pr-[8px] pl-[3px] font-['Roboto',sans-serif] text-[8px] leading-[10px] text-[#222]">
          <span className="w-[755px]">Select: Click and drag to select.</span>
          <span className="w-[290px]">DA_SmithChartMatch3_RF_Tutorial_6 DA_SmithChartMatch3</span>
          <span className="w-[74px] text-[#2a2ac0]">ads_device:drawing</span>
          <span className="w-[74px]">8.625, 2.000</span>
          <span>-1.500, -0.375</span>
          <span className="ml-auto">in</span>
          <span className="absolute right-[15px] bottom-[-5px] font-['Liberation_Sans','Noto_Sans_CJK_SC',sans-serif] text-[19px] leading-[24px] whitespace-nowrap text-[#8c8c8c]/80 [text-shadow:1px_1px_0_#ffffffcc]">
            CSDN @射频老菜鸟
          </span>
        </footer>
      </main>
    </div>
  );
}
